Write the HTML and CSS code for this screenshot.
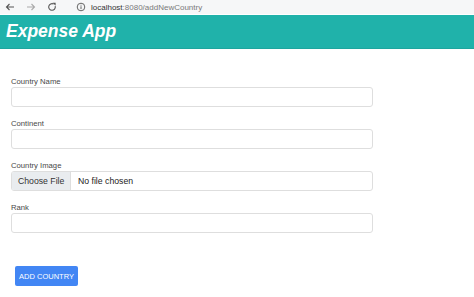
FILE: index.html
```html
<!DOCTYPE html>
<html lang="en">
<head>
<meta charset="utf-8">
<title>Expense App</title>
<link rel="stylesheet" href="styles.css">
</head>
<body>
<div class="chrome">
  <svg class="ico" width="10" height="10" viewBox="0 0 10 10"><path d="M9 5H1.5M4.5 2L1.5 5l3 3" fill="none" stroke="#555" stroke-width="1.1"/></svg>
  <svg class="ico" width="10" height="10" viewBox="0 0 10 10"><path d="M1 5h7.5M5.5 2l3 3-3 3" fill="none" stroke="#aaa" stroke-width="1.1"/></svg>
  <svg class="ico" width="10" height="10" viewBox="0 0 10 10"><path d="M8.2 4.2A3.3 3.3 0 1 1 6.6 2.1" fill="none" stroke="#555" stroke-width="1.1"/><path d="M5.6 0.8h3v3z" fill="#555"/></svg>
  <svg class="ico info" width="10" height="10" viewBox="0 0 10 10"><circle cx="5" cy="5" r="3.8" fill="none" stroke="#555" stroke-width="0.9"/><path d="M5 4.3v2.8M5 2.8v0.8" stroke="#555" stroke-width="0.9"/></svg>
  <span class="url"><span class="host">localhost</span>:8080/addNewCountry</span>
</div>
<header class="appbar"><h1 class="title">Expense App</h1></header>
<form class="form">
  <div class="group">
    <label class="label">Country Name</label>
    <div class="input"></div>
  </div>
  <div class="group">
    <label class="label">Continent</label>
    <div class="input"></div>
  </div>
  <div class="group">
    <label class="label">Country Image</label>
    <div class="input file"><span class="choose">Choose File</span><span class="none">No file chosen</span></div>
  </div>
  <div class="group">
    <label class="label">Rank</label>
    <div class="input"></div>
  </div>
  <button type="button" class="btn">ADD COUNTRY</button>
</form>
</body>
</html>
```
FILE: styles.css
```css
html, body {
  margin: 0;
  padding: 0;
  background: #fff;
  font-family: "Liberation Sans", Arial, sans-serif;
}
.chrome {
  height: 14px;
  background: #f6f7f8;
  display: flex;
  align-items: center;
  padding-left: 5px;
  gap: 11px;
  margin-bottom: 1px;
}
.ico { display: block; }
.info { margin-left: 8px; }
.url {
  font-size: 8px;
  color: #7a7a7a;
  margin-left: -6px;
}
.host { color: #333; }
.appbar {
  height: 34px;
  background: #20b2aa;
  border-bottom: 1px solid #1ea59e;
  box-sizing: border-box;
  display: flex;
  align-items: center;
  padding-left: 6px;
}
.title {
  margin: 0;
  font-size: 17.5px;
  font-weight: bold;
  font-style: italic;
  color: #fff;
}
.form {
  padding: 28px 0 0 11px;
  display: flex;
  flex-direction: column;
  align-items: flex-start;
  gap: 12px;
}
.group {
  display: flex;
  flex-direction: column;
  gap: 1px;
}
.label {
  font-size: 7.7px;
  line-height: 9px;
  color: #484848;
}
.input {
  box-sizing: border-box;
  width: 362px;
  height: 20px;
  border: 1px solid #dedede;
  border-radius: 3px;
  background: #fff;
}
.file {
  display: flex;
  align-items: stretch;
  overflow: hidden;
  font-size: 8.7px;
  color: #222;
}
.choose {
  width: 59px;
  box-sizing: border-box;
  background: #e9ecef;
  border-right: 1px solid #dedede;
  display: flex;
  align-items: center;
  padding-left: 6px;
  color: #333;
}
.none {
  display: flex;
  align-items: center;
  padding-left: 7px;
}
.btn {
  margin: 21px 0 0 4px;
  width: 63px;
  height: 20px;
  border: 0;
  border-radius: 2px;
  background: #4286f4;
  color: #fff;
  font-family: "Liberation Sans", Arial, sans-serif;
  font-size: 7.5px;
  padding: 0;
}
```
